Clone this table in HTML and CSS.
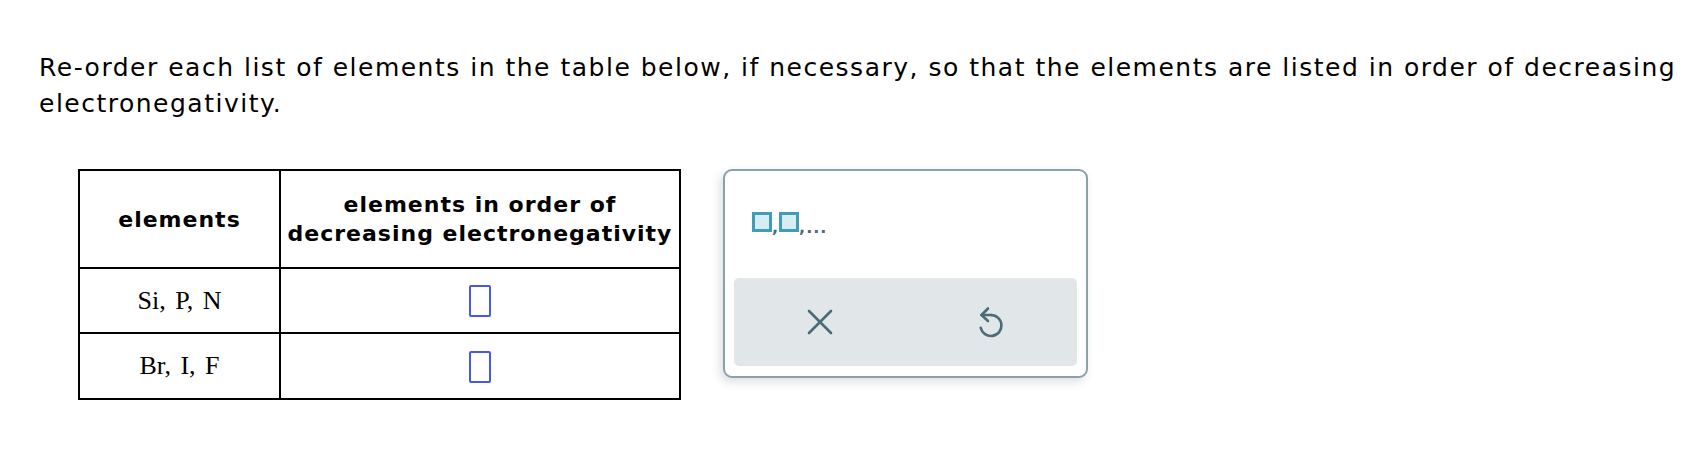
FILE: index.html
```html
<!DOCTYPE html>
<html>
<head>
<meta charset="utf-8">
<link rel="stylesheet" href="styles.css">
</head>
<body>
<div class="page">
  <p class="prompt">Re-order each list of elements in the table below, if necessary, so that the elements are listed in order of decreasing electronegativity.</p>
  <div class="work">
    <table class="grid">
      <tr class="head">
        <th class="c1">elements</th>
        <th class="c2">elements in order of<br>decreasing electronegativity</th>
      </tr>
      <tr class="row">
        <td class="c1">Si, P, N</td>
        <td class="c2"><span class="slot"></span></td>
      </tr>
      <tr class="row last">
        <td class="c1">Br, I, F</td>
        <td class="c2"><span class="slot"></span></td>
      </tr>
    </table>
    <div class="panel">
      <div class="palette">
        <span class="chips"><span class="sq"></span><span class="cm">,</span><span class="sq"></span><span class="cm">,...</span></span>
      </div>
      <div class="actions">
        <button class="btn" aria-label="clear">
          <svg width="26" height="26" viewBox="0 0 26 26"><path d="M2 2 L24 24 M24 2 L2 24" fill="none" stroke="#4b6b78" stroke-width="2.6" stroke-linecap="round"/></svg>
        </button>
        <button class="btn" aria-label="undo">
          <svg width="28" height="34" viewBox="0 0 28 34"><path d="M14 10 A10.5 10.5 0 1 1 3.7 22.8" fill="none" stroke="#4b6b78" stroke-width="2.6" stroke-linecap="round"/><path d="M11 3.5 L4.5 10 L11 16" fill="none" stroke="#4b6b78" stroke-width="2.6" stroke-linecap="round" stroke-linejoin="round"/><path d="M4.5 10 L14 10" fill="none" stroke="#4b6b78" stroke-width="2.6" stroke-linecap="round"/></svg>
        </button>
      </div>
    </div>
  </div>
</div>
</body>
</html>
```

FILE: styles.css
```css
html, body {
  margin: 0;
  padding: 0;
  background: #fff;
}
.page {
  padding: 50px 20px 0 39px;
  font-family: "DejaVu Sans", Verdana, sans-serif;
  color: #000;
}
.prompt {
  margin: 0;
  font-size: 25px;
  letter-spacing: 1.5px;
  line-height: 36px;
}
.work {
  display: flex;
  align-items: flex-start;
  margin-top: 47px;
  margin-left: 39px;
  gap: 42px;
}
.grid {
  border-collapse: separate;
  border-spacing: 0;
  border-top: 2px solid #000;
  border-left: 2px solid #000;
}
.grid th, .grid td {
  border-right: 2px solid #000;
  border-bottom: 2px solid #000;
  padding: 0;
  text-align: center;
  vertical-align: middle;
  box-sizing: border-box;
}
.grid .c1 { width: 201px; }
.grid .c2 { width: 400px; }
.head th {
  height: 98px;
  font-weight: bold;
  font-size: 22px;
  letter-spacing: 1px;
  line-height: 29px;
}
.row td {
  height: 65px;
  font-family: "Liberation Serif", "Times New Roman", serif;
  font-size: 26px;
  word-spacing: 3px;
}
.row.last td { height: 66px; }
.slot {
  display: inline-block;
  width: 22px;
  height: 32px;
  box-sizing: border-box;
  border: 2px solid #4656f2;
  border-radius: 2px;
  vertical-align: middle;
}
.panel {
  width: 365px;
  height: 209px;
  box-sizing: border-box;
  border: 2px solid #8ca0a9;
  border-radius: 9px;
  background: #fff;
  box-shadow: -3px 4px 10px rgba(60, 80, 90, 0.18);
  padding: 0 9px 10px 9px;
  display: flex;
  flex-direction: column;
}
.palette {
  height: 107px;
  flex: none;
  box-sizing: border-box;
  padding: 41px 0 0 18px;
}
.chips {
  display: inline-flex;
  align-items: flex-end;
  line-height: 1;
}
.chips .sq {
  display: inline-block;
  width: 20px;
  height: 20px;
  box-sizing: border-box;
  border: 3px solid #429cb6;
  background: #d5edf3;
}
.chips .cm {
  color: #4d6a75;
  font-size: 16px;
  font-weight: bold;
  letter-spacing: 1px;
  margin-bottom: -4px;
}
.actions {
  flex: 1;
  display: flex;
  background: #e1e6e9;
  border-radius: 5px;
}
.btn {
  flex: 1;
  border: 0;
  background: transparent;
  padding: 0;
  display: flex;
  align-items: center;
  justify-content: center;
}
```
